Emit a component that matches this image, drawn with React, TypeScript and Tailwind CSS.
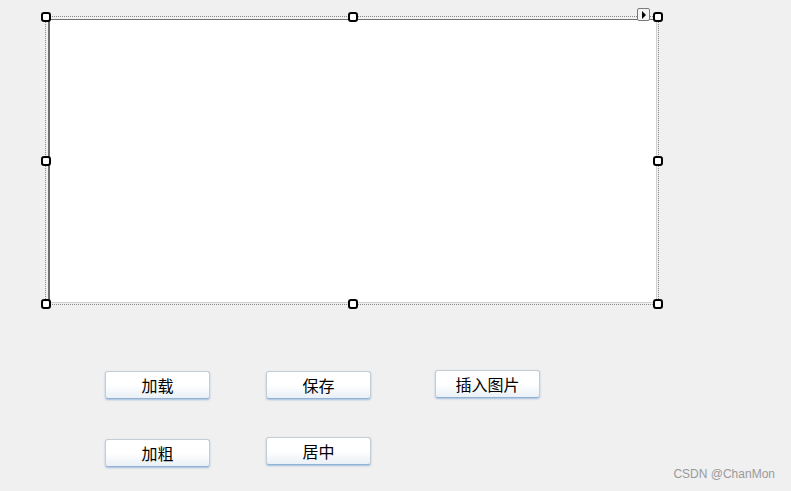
import React from 'react';

const cjk = { fontFamily: '"Noto Sans CJK SC", "Noto Sans", sans-serif' };

function Handle({ className }: { className: string }) {
  return (
    <div
      className={`absolute w-[10px] h-[10px] bg-white border-2 border-black rounded-[3px] ${className}`}
    />
  );
}

function Btn({ label, className = '' }: { label: string; className?: string }) {
  return (
    <button
      className={`w-[105px] h-[28px] rounded-[3px] border border-[#c4ccd4] border-b-[#8fb2d6] bg-gradient-to-b from-white via-white to-[#eaf0f6] shadow-[0_1px_2px_rgba(100,145,200,0.55)] text-[16px] text-black font-normal leading-none flex items-center justify-center ${className}`}
      style={cjk}
    >
      {label}
    </button>
  );
}

export default function App() {
  return (
    <div className="w-[791px] h-[491px] bg-[#f0f0f0] relative overflow-hidden">
      <div className="pt-[16px] pl-[45px]">
        <div className="relative w-[614px] h-[289px] border border-dotted border-[#8a8a8a] pl-[2px] pt-[2px] pr-[1px] pb-[1px]">
          <div className="h-full bg-white border-l-2 border-t border-[#6f6f6f] border-r border-b border-r-[#d0d0d0] border-b-[#d0d0d0]" />
          <Handle className="-left-[5px] -top-[5px]" />
          <Handle className="left-[302px] -top-[5px]" />
          <Handle className="-right-[5px] -top-[5px]" />
          <Handle className="-left-[5px] top-[139px]" />
          <Handle className="-right-[5px] top-[139px]" />
          <Handle className="-left-[5px] -bottom-[5px]" />
          <Handle className="left-[302px] -bottom-[5px]" />
          <Handle className="-right-[5px] -bottom-[5px]" />
          <div className="absolute right-[8px] -top-[9px] w-[13px] h-[13px] bg-[#f4f4f4] border border-[#7a7a7a] rounded-[2px] flex items-center justify-center">
            <svg width="6" height="8" viewBox="0 0 6 8">
              <path d="M1 0 L5 4 L1 8 Z" fill="#000" />
            </svg>
          </div>
        </div>
      </div>

      <div className="pl-[105px] pt-[66px] flex flex-col gap-[40px]">
        <div className="flex items-start">
          <Btn label="加载" />
          <Btn label="保存" className="ml-[56px]" />
          <Btn label="插入图片" className="ml-[64px] -mt-[1px]" />
        </div>
        <div className="flex items-start">
          <Btn label="加粗" />
          <Btn label="居中" className="ml-[56px] -mt-[2px]" />
        </div>
      </div>

      <div
        className="absolute right-[16px] bottom-[8px] text-[12px] text-[#9a9a9a]"
        style={{ fontFamily: '"Liberation Sans", Arial, sans-serif' }}
      >
        CSDN @ChanMon
      </div>
    </div>
  );
}
